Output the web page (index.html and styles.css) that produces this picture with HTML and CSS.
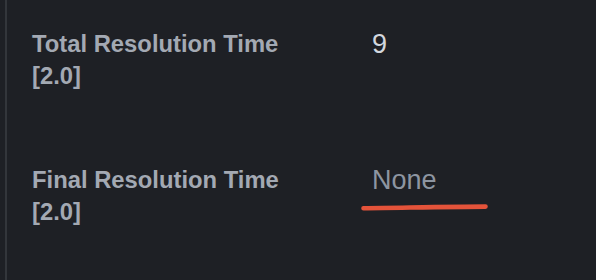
FILE: index.html
```html
<!DOCTYPE html>
<html lang="en">
<head>
<meta charset="utf-8">
<title>Resolution Times</title>
<link rel="stylesheet" href="styles.css">
</head>
<body>
<div class="panel">
  <dl class="fields">
    <div class="field">
      <dt class="label">Total Resolution Time<br>[2.0]</dt>
      <dd class="value value-strong">9</dd>
    </div>
    <div class="field">
      <dt class="label">Final Resolution Time<br>[2.0]</dt>
      <dd class="value value-muted">None
        <svg class="scribble" width="130" height="10" viewBox="0 0 130 10" aria-hidden="true">
          <path d="M2.5 6.2 C 40 5.8, 88 4.6, 124.5 4.6" stroke="#e4533a" stroke-width="4.6" stroke-linecap="round" fill="none"/>
        </svg>
      </dd>
    </div>
  </dl>
</div>
</body>
</html>
```

FILE: styles.css
```css
html, body {
  margin: 0;
  padding: 0;
  background: #1e2025;
  height: 100%;
}

body {
  font-family: "Liberation Sans", Arial, sans-serif;
  padding-left: 5px;
}

.panel {
  height: 100%;
  border-left: 2px solid #33363b;
  box-sizing: border-box;
}

.fields {
  margin: 0;
  padding: 28px 0 0 25px;
  display: flex;
  flex-direction: column;
  gap: 72px;
}

.field {
  display: grid;
  grid-template-columns: 340px 1fr;
  align-items: start;
}

.label {
  margin: 0;
  font-weight: 700;
  font-size: 23.8px;
  line-height: 32px;
  color: #a3a9b3;
}

.value {
  margin: 0;
  font-size: 27px;
  line-height: 32px;
  position: relative;
}

.value-strong {
  color: #d3d7de;
}

.value-muted {
  color: #8d95a1;
}

.scribble {
  position: absolute;
  left: -11px;
  top: 38px;
}
```
